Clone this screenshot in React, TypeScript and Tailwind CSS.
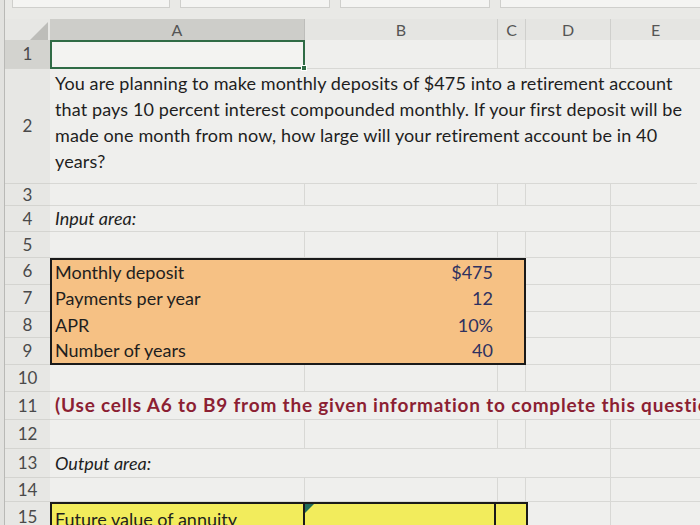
const font = { fontFamily: 'Lato, "Open Sans", sans-serif' }

const colWidths = { a: 255, b: 193, c: 28, d: 85, e: 90 }

function RowHead({ n, h, active }: { n?: number | string; h: number; active?: boolean }) {
  return (
    <div
      className={`shrink-0 w-[45px] flex items-center justify-center border-b border-[#d4d4d0] text-[17px] text-[#4a4a4a] ${active ? 'bg-[#d3d3cf]' : 'bg-[#e7e7e4]'}`}
      style={{ height: h }}
    >
      {n}
    </div>
  )
}

function Blank({ w, cls = '' }: { w: number; cls?: string }) {
  return <div className={`shrink-0 border-r border-b border-[#d8d8d5] ${cls}`} style={{ width: w }} />
}

function PlainRow({ n, h, children }: { n: number; h: number; children?: React.ReactNode }) {
  return (
    <div className="flex shrink-0" style={{ height: h }}>
      <RowHead n={n} h={h} />
      {children ? (
        <div className="shrink-0 border-b border-[#d8d8d5] flex items-center pl-[5px] w-[476px]">{children}</div>
      ) : (
        <>
          <Blank w={colWidths.a} />
          <Blank w={colWidths.b} />
          <Blank w={colWidths.c} />
        </>
      )}
      <Blank w={colWidths.d} />
      <Blank w={colWidths.e} />
    </div>
  )
}

function InputRow({ n, h, label, value, first, last }: { n: number; h: number; label: string; value: string; first?: boolean; last?: boolean }) {
  return (
    <div className="flex shrink-0" style={{ height: h }}>
      <RowHead n={n} h={h} />
      <div
        className={`shrink-0 w-[476px] bg-[#f6c184] border-x-2 border-[#1a1a1a] flex items-center ${first ? 'border-t-2' : ''} ${last ? 'border-b-2' : ''}`}
      >
        <div className="w-[253px] pl-[3px] text-[18px] text-[#1e1e1e]">{label}</div>
        <div className="w-[188px] text-right text-[18px] text-[#2e3160]">{value}</div>
      </div>
      <Blank w={colWidths.d} />
      <Blank w={colWidths.e} />
    </div>
  )
}

export default function App() {
  return (
    <div className="w-[700px] h-[525px] overflow-hidden bg-[#efefed] flex" style={font}>
      {/* left frame strip */}
      <div className="w-[5px] shrink-0 bg-[#e2e2df] border-r border-[#b9b9b6]" />
      <div className="flex-1 flex flex-col min-w-0">
        {/* ribbon remnant */}
        <div className="h-[8px] shrink-0 flex gap-[10px] pl-[7px] bg-[#e9e9e6]">
          <div className="w-[158px] bg-[#f4f4f2] border-b border-x border-[#cfcfcc]" />
          <div className="w-[150px] bg-[#f4f4f2] border-b border-x border-[#cfcfcc]" />
          <div className="w-[150px] bg-[#f4f4f2] border-b border-x border-[#cfcfcc]" />
          <div className="flex-1 bg-[#f4f4f2] border-b border-l border-[#cfcfcc]" />
        </div>
        <div className="h-[11px] shrink-0 bg-[#e9e9e6]" />

        {/* column headers */}
        <div className="flex h-[21px] shrink-0 text-[16px] text-[#555]">
          <div className="w-[45px] shrink-0 bg-[#e7e7e4] flex items-end justify-end pr-[2px]">
            <svg width="18" height="18" viewBox="0 0 18 18">
              <polygon points="18,0 18,18 0,18" fill="#bdbdb9" />
            </svg>
          </div>
          <div className="shrink-0 bg-[#cdcdc9] border-r border-[#bdbdba] flex items-center justify-center" style={{ width: colWidths.a }}>A</div>
          <div className="shrink-0 bg-[#e5e5e2] border-r border-[#cfcfcc] flex items-center justify-center" style={{ width: colWidths.b }}>B</div>
          <div className="shrink-0 bg-[#e5e5e2] border-r border-[#cfcfcc] flex items-center justify-center" style={{ width: colWidths.c }}>C</div>
          <div className="shrink-0 bg-[#e5e5e2] border-r border-[#cfcfcc] flex items-center justify-center" style={{ width: colWidths.d }}>D</div>
          <div className="shrink-0 bg-[#e5e5e2] border-r border-[#cfcfcc] flex items-center justify-center" style={{ width: colWidths.e }}>E</div>
        </div>

        {/* row 1 with selected A1 */}
        <div className="flex h-[29px] shrink-0">
          <RowHead n={1} h={29} active />
          <div className="relative shrink-0 border-2 border-[#2f6b45] bg-[#f3f3f1]" style={{ width: colWidths.a }}>
            <div className="absolute -right-[4px] -bottom-[4px] w-[6px] h-[6px] bg-[#2f6b45] border border-white" />
          </div>
          <Blank w={colWidths.b} />
          <Blank w={colWidths.c} />
          <Blank w={colWidths.d} />
          <Blank w={colWidths.e} />
        </div>

        {/* row 2: question text */}
        <div className="flex h-[115px] shrink-0">
          <RowHead n={2} h={115} />
          <div className="shrink-0 w-[647px] border-b border-[#d8d8d5] pl-[5px] pt-[1px] text-[18px] leading-[26px] tracking-[0.12px] text-[#1e1e1e]">
            You are planning to make monthly deposits of $475 into a retirement account that pays 10 percent interest compounded monthly. If your first deposit will be made one month from now, how large will your retirement account be in 40 years?
          </div>
        </div>

        <PlainRow n={3} h={22} />
        <PlainRow n={4} h={26}>
          <span className="italic text-[18px] text-[#1e1e1e]">Input area:</span>
        </PlainRow>
        <PlainRow n={5} h={26} />

        <InputRow n={6} h={27} label="Monthly deposit" value="$475" first />
        <InputRow n={7} h={27} label="Payments per year" value="12" />
        <InputRow n={8} h={26} label="APR" value="10%" />
        <InputRow n={9} h={27} label="Number of years" value="40" last />

        <PlainRow n={10} h={27} />
        <div className="flex h-[28px] shrink-0">
          <RowHead n={11} h={28} />
          <div className="flex-1 min-w-0 border-b border-[#d8d8d5] pl-[5px] flex items-center whitespace-nowrap overflow-hidden text-[19px] font-bold tracking-[0.8px] text-[#8c1f33]">
            (Use cells A6 to B9 from the given information to complete this question.)
          </div>
        </div>
        <PlainRow n={12} h={29} />
        <PlainRow n={13} h={29}>
          <span className="italic text-[18px] text-[#1e1e1e]">Output area:</span>
        </PlainRow>
        <PlainRow n={14} h={24} />

        {/* row 15 output */}
        <div className="flex h-[30px] shrink-0">
          <RowHead n={15} h={30} />
          <div className="shrink-0 w-[478px] bg-[#f2ec5c] border-t-2 border-x-2 border-[#1a1a1a] flex">
            <div className="w-[253px] border-r-2 border-[#1a1a1a] pl-[3px] pt-[2px] text-[18px] text-[#1e1e1e] leading-[26px]">Future value of annuity</div>
            <div className="relative w-[191px] border-r-2 border-[#1a1a1a]">
              <svg className="absolute left-0 top-0" width="9" height="9" viewBox="0 0 9 9">
                <polygon points="0,0 9,0 0,9" fill="#1f6b5a" />
              </svg>
            </div>
            <div className="flex-1" />
          </div>
          <Blank w={colWidths.d - 2} />
          <Blank w={colWidths.e} />
        </div>
      </div>
    </div>
  )
}
